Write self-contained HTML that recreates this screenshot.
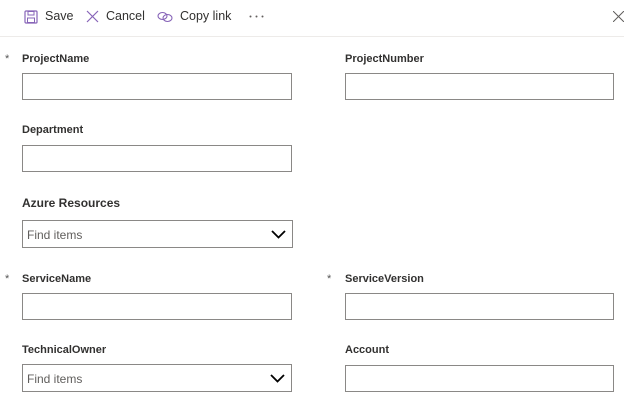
<!DOCTYPE html>
<html><head><style>
body{margin:0;width:624px;height:416px;background:#fff;font-family:"Liberation Sans",sans-serif;position:relative;overflow:hidden;color:#323130}
.a{position:absolute}
.lbl{position:absolute;font-size:11px;font-weight:bold;color:#323130;margin-top:1px}
.star{position:absolute;font-size:11px;color:#555}
.box{position:absolute;border:1px solid #8a8886;box-sizing:border-box;background:#fff}
.ph{position:absolute;left:4px;top:7px;font-size:12px;color:#605e5c}
.tb{position:absolute;top:9px;font-size:12.5px;color:#323130}
</style></head><body>
<svg class="a" style="left:24px;top:10px" width="14" height="14" viewBox="0 0 14 14"><rect x="1" y="1" width="12" height="12" rx="1" fill="none" stroke="#8764b8" stroke-width="1.2"/><rect x="4" y="1.5" width="6" height="3.5" fill="none" stroke="#8764b8"/><rect x="3.5" y="8" width="7" height="4.5" fill="none" stroke="#8764b8"/></svg>
<div class="tb" style="left:45px">Save</div>
<svg class="a" style="left:86px;top:10px" width="13" height="13" viewBox="0 0 13 13"><path d="M1 1L12 12M12 1L1 12" stroke="#8764b8" stroke-width="1.2"/></svg>
<div class="tb" style="left:106px">Cancel</div>
<svg class="a" style="left:157px;top:11px" width="16" height="12" viewBox="0 0 16 12"><ellipse cx="5.5" cy="5" rx="4.5" ry="3.5" fill="none" stroke="#8764b8" stroke-width="1.1"/><ellipse cx="10.5" cy="7" rx="4.5" ry="3.5" fill="none" stroke="#8764b8" stroke-width="1.1"/></svg>
<div class="tb" style="left:180px">Copy link</div>
<svg class="a" style="left:249px;top:15px" width="16" height="3"><circle cx="1.5" cy="1.5" r="1" fill="#605e5c"/><circle cx="7.5" cy="1.5" r="1" fill="#605e5c"/><circle cx="13.5" cy="1.5" r="1" fill="#605e5c"/></svg>
<svg class="a" style="left:613px;top:11px" width="11" height="11" viewBox="0 0 11 11"><path d="M0 0L11 11M11 0L0 11" stroke="#605e5c" stroke-width="1"/></svg>
<div class="a" style="left:0;top:36px;width:624px;height:1px;background:#edebe9"></div>

<div class="star" style="left:5px;top:53px">*</div>
<div class="lbl" style="left:22px;top:52px">ProjectName</div>
<div class="box" style="left:22px;top:73px;width:270px;height:27px"></div>
<div class="lbl" style="left:345px;top:52px">ProjectNumber</div>
<div class="box" style="left:345px;top:73px;width:269px;height:27px"></div>

<div class="lbl" style="left:22px;top:123px">Department</div>
<div class="box" style="left:22px;top:145px;width:270px;height:27px"></div>

<div class="lbl" style="left:22px;top:195px;font-size:12px">Azure Resources</div>
<div class="box" style="left:22px;top:220px;width:271px;height:28px"><div class="ph">Find items</div>
<svg class="a" style="left:248px;top:9px" width="15" height="9" viewBox="0 0 15 9"><path d="M1 1L7.5 7.5L14 1" fill="none" stroke="#000" stroke-width="1.8"/></svg></div>

<div class="star" style="left:5px;top:273px">*</div>
<div class="lbl" style="left:22px;top:272px">ServiceName</div>
<div class="box" style="left:22px;top:293px;width:270px;height:27px"></div>
<div class="star" style="left:327px;top:273px">*</div>
<div class="lbl" style="left:345px;top:272px">ServiceVersion</div>
<div class="box" style="left:345px;top:293px;width:269px;height:27px"></div>

<div class="lbl" style="left:22px;top:343px">TechnicalOwner</div>
<div class="box" style="left:22px;top:364px;width:270px;height:28px"><div class="ph">Find items</div>
<svg class="a" style="left:247px;top:9px" width="15" height="9" viewBox="0 0 15 9"><path d="M1 1L7.5 7.5L14 1" fill="none" stroke="#000" stroke-width="1.8"/></svg></div>
<div class="lbl" style="left:345px;top:343px">Account</div>
<div class="box" style="left:345px;top:365px;width:269px;height:27px"></div>
</body></html>
